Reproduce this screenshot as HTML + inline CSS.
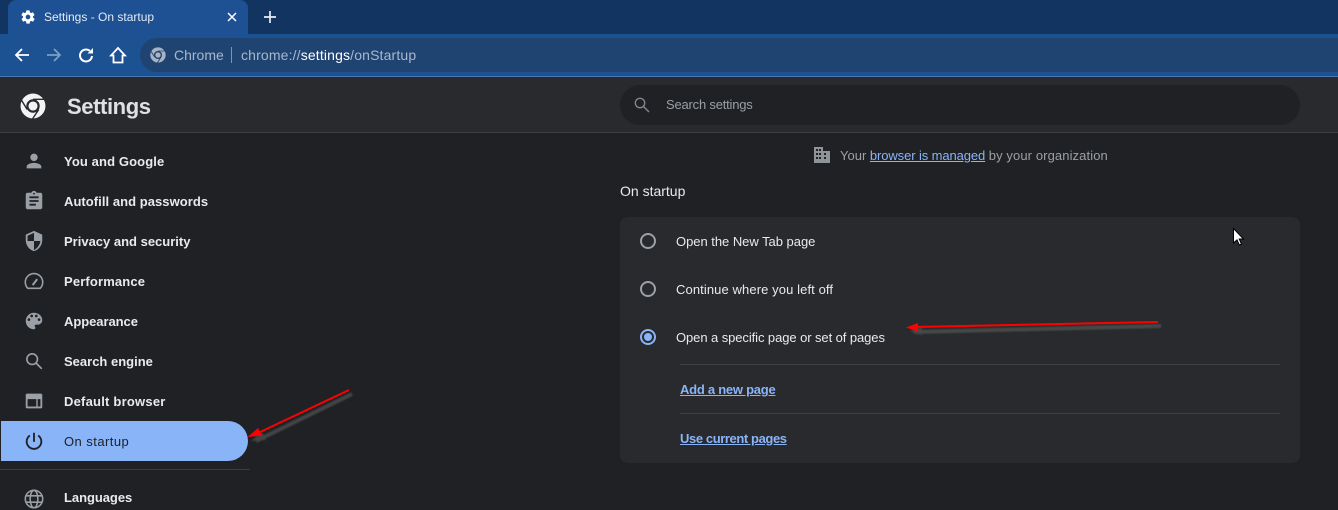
<!DOCTYPE html>
<html>
<head>
<meta charset="utf-8">
<style>
html,body{margin:0;padding:0;width:1338px;height:504px;overflow:hidden;background:#202124;font-family:"Liberation Sans",sans-serif;}
.a{position:absolute;white-space:nowrap;}
.nav{position:absolute;left:64px;font-size:13px;font-weight:700;color:#e8eaed;line-height:16px;white-space:nowrap;letter-spacing:0}
.ic{position:absolute;left:23px;width:22px;height:22px}
.f{fill:#9aa0a6}
.opt{position:absolute;left:676px;font-size:13px;color:#e8eaed;line-height:16px;white-space:nowrap;letter-spacing:-.08px}
.radio{position:absolute;left:640px;width:12px;height:12px;border:2px solid #9aa0a6;border-radius:50%}
.lnk{position:absolute;left:680px;font-size:13px;font-weight:700;color:#8ab4f8;text-decoration:underline;line-height:16px;white-space:nowrap;letter-spacing:-.25px}
</style>
</head>
<body>
<!-- top chrome -->
<div class="a" style="left:0;top:0;width:1338px;height:34px;background:#123460"></div>
<div class="a" style="left:0;top:34px;width:1338px;height:42px;background:#1c5192"></div>
<div class="a" style="left:0;top:76px;width:1338px;height:1px;background:#4a78b0"></div>
<div class="a" style="left:8px;top:0;width:240px;height:36px;background:#1d5193;border-radius:8px 8px 0 0"></div>
<svg class="a" style="left:20px;top:9px" width="16" height="16" viewBox="0 0 24 24" fill="#fff"><path d="M19.400 13c.1-.3.1-.6.1-1s0-.7-.1-1l2.100-1.600c.2-.2.2-.4.1-.6l-2-3.500c-.1-.2-.4-.3-.6-.2l-2.500 1c-.5-.4-1.100-.7-1.700-1l-.4-2.600c0-.3-.2-.4-.5-.4h-4c-.3 0-.5.1-.5.4l-.4 2.600c-.6.300-1.200.6-1.700 1l-2.500-1c-.2-.1-.5 0-.6.2l-2 3.500c-.1.200-.1.400.1.600L4.600 11c0 .3-.1.600-.1 1s0 .7.1 1l-2.100 1.600c-.2.200-.2.400-.1.600l2 3.500c.1.200.4.300.6.200l2.500-1c.5.400 1.100.7 1.700 1l.4 2.600c0 .3.200.4.500.4h4c.3 0 .5-.1.500-.4l.4-2.600c.6-.3 1.200-.6 1.700-1l2.500 1c.2.100.5 0 .6-.2l2-3.500c.1-.2.1-.4-.1-.6zM12 15.500a3.500 3.500 0 1 1 0-7 3.500 3.500 0 0 1 0 7z"/></svg>
<div class="a" style="left:44px;top:9px;font-size:12px;line-height:16px;color:#e4ebf5">Settings - On startup</div>
<svg class="a" style="left:226px;top:11px" width="12" height="12" viewBox="0 0 12 12" stroke="#fff" stroke-width="1.500" fill="none"><path d="M2 2l8 8M10 2l-8 8"/></svg>
<svg class="a" style="left:263px;top:10px" width="14" height="14" viewBox="0 0 14 14" stroke="#e8eef7" stroke-width="1.700" fill="none"><path d="M7 1v12M1 7h12"/></svg>
<!-- toolbar icons -->
<svg class="a" style="left:14px;top:47px" width="16" height="16" viewBox="0 0 16 16" stroke="#fff" stroke-width="1.800" fill="none"><path d="M15 8H2M8 2L2 8l6 6"/></svg>
<svg class="a" style="left:46px;top:47px" width="16" height="16" viewBox="0 0 16 16" stroke="#7f9ec6" stroke-width="1.800" fill="none"><path d="M1 8h13M8 2l6 6-6 6"/></svg>
<svg class="a" style="left:78px;top:47px" width="16" height="16" viewBox="0 0 16 16" stroke="#fff" stroke-width="2" fill="none"><path d="M14 9a6 6 0 1 1-2.200-5.200"/><path d="M15 1v5.500H9.500z" fill="#fff" stroke="none"/></svg>
<svg class="a" style="left:109px;top:46px" width="18" height="18" viewBox="0 0 18 18" stroke="#fff" stroke-width="1.800" fill="none"><path d="M9 2L2 9.500h2.500V16.500h9V9.500H16z" stroke-linejoin="miter"/></svg>
<!-- omnibox -->
<div class="a" style="left:140px;top:38px;width:1198px;height:34px;background:#1f4472;border-radius:17px 0 0 17px"></div>
<svg class="a" style="left:150px;top:47px" width="16" height="16" viewBox="0 0 24 24"><circle cx="12" cy="12" r="11.500" fill="#a9b4c2"/><circle cx="12" cy="12" r="6" fill="#1f4472"/><circle cx="12" cy="12" r="4" fill="#a9b4c2"/><path d="M12 6h11M7 15L1.500 6.500M16.500 15L11 24" stroke="#1f4472" stroke-width="1.300" fill="none"/></svg>
<div class="a" style="left:174px;top:47px;font-size:14px;line-height:16px;color:#a8b8cc">Chrome</div>
<div class="a" style="left:231px;top:47px;width:1px;height:16px;background:#7f95b2"></div>
<div class="a" style="left:241px;top:47px;font-size:14px;line-height:16px;color:#a8b8cc;letter-spacing:.15px">chrome://<span style="color:#fff">settings</span>/onStartup</div>
<!-- settings header -->
<div class="a" style="left:0;top:77px;width:1338px;height:55px;background:#292a2d"></div>
<div class="a" style="left:0;top:132px;width:1338px;height:1px;background:#3f4043"></div>
<svg class="a" style="left:20px;top:93px" width="26" height="26" viewBox="0 0 24 24"><circle cx="12" cy="12" r="11.500" fill="#f1f3f4"/><circle cx="12" cy="12" r="6.200" fill="#292a2d"/><circle cx="12" cy="12" r="4.200" fill="#f1f3f4"/><path d="M12 5.800h11M6.600 15.200L1 6M17.300 15.200L11.500 24" stroke="#292a2d" stroke-width="1.300" fill="none"/></svg>
<div class="a" style="left:67px;top:94px;font-size:22px;line-height:26px;font-weight:700;color:#dfe1e5;letter-spacing:-.4px">Settings</div>
<div class="a" style="left:620px;top:85px;width:680px;height:40px;background:#202124;border-radius:20px"></div>
<svg class="a" style="left:634px;top:97px" width="16" height="16" viewBox="0 0 16 16" stroke="#80868b" stroke-width="1.400" fill="none"><circle cx="6" cy="6" r="4.700"/><path d="M9.500 9.500l5.500 5.500"/></svg>
<div class="a" style="left:666px;top:97px;font-size:13px;line-height:16px;color:#9aa0a6;letter-spacing:-.2px">Search settings</div>
<!-- sidebar icons -->
<svg class="ic" style="top:150px" viewBox="0 0 24 24"><path class="f" d="M12 12c2.210 0 4-1.790 4-4s-1.790-4-4-4-4 1.790-4 4 1.790 4 4 4zm0 2c-2.670 0-8 1.340-8 4v2h16v-2c0-2.660-5.330-4-8-4z"/></svg>
<svg class="ic" style="top:190px" viewBox="0 0 24 24"><path class="f" d="M19 3h-4.180C14.400 1.840 13.300 1 12 1c-1.300 0-2.400.84-2.820 2H5c-1.100 0-2 .9-2 2v14c0 1.100.9 2 2 2h14c1.100 0 2-.9 2-2V5c0-1.100-.9-2-2-2zm-7 0c.55 0 1 .45 1 1s-.45 1-1 1-1-.45-1-1 .45-1 1-1zm2 14H7v-2h7v2zm3-4H7v-2h10v2zm0-4H7V7h10v2z"/></svg>
<svg class="ic" style="top:230px" viewBox="0 0 24 24"><path class="f" d="M12 1L3 5v6c0 5.550 3.840 10.740 9 12 5.160-1.260 9-6.450 9-12V5l-9-4zm0 10.990h7c-.53 4.120-3.280 7.790-7 9.940V12H5V6.300l7-3.110v8.800z"/></svg>
<svg class="ic" style="top:270px" viewBox="0 0 24 24" stroke="#9aa0a6" stroke-width="1.700" fill="none"><path d="M5.200 20a9.500 9.500 0 1 1 13.600 0z"/><path d="M10.500 16.500l5-6.500" stroke-width="2.200"/></svg>
<svg class="ic" style="top:310px" viewBox="0 0 24 24"><path class="f" d="M12 3c-4.970 0-9 4.030-9 9s4.030 9 9 9c.83 0 1.500-.67 1.500-1.500 0-.39-.15-.74-.39-1.010-.23-.26-.38-.61-.38-.99 0-.83.67-1.500 1.500-1.500H16c2.760 0 5-2.240 5-5 0-4.420-4.030-8-9-8zm-5.500 9c-.83 0-1.500-.67-1.500-1.500S5.670 9 6.500 9 8 9.670 8 10.500 7.330 12 6.500 12zm3-4C8.670 8 8 7.330 8 6.500S8.670 5 9.500 5s1.500.67 1.500 1.500S10.330 8 9.500 8zm5 0c-.83 0-1.500-.67-1.500-1.500S13.670 5 14.500 5s1.500.67 1.500 1.500S15.330 8 14.500 8zm3 4c-.83 0-1.500-.67-1.500-1.500S16.670 9 17.500 9s1.500.67 1.500 1.500-.67 1.500-1.500 1.500z"/></svg>
<svg class="ic" style="top:350px" viewBox="0 0 24 24" stroke="#9aa0a6" stroke-width="1.800" fill="none"><circle cx="10" cy="10" r="5.800"/><path d="M14.300 14.300L20.500 20.500"/></svg>
<svg class="ic" style="top:390px" viewBox="0 0 24 24"><path class="f" fill-rule="evenodd" d="M4.500 4h15A1.500 1.500 0 0 1 21 5.500v13a1.500 1.500 0 0 1-1.500 1.500h-15A1.500 1.500 0 0 1 3 18.500v-13A1.500 1.500 0 0 1 4.500 4zM5 10v8h9.500v-8zm11 0v8h3v-8z"/></svg>
<div class="a" style="left:1px;top:421px;width:247px;height:40px;background:#8ab4f8;border-radius:0 20px 20px 0"></div>
<svg class="ic" style="top:430px" viewBox="0 0 24 24" stroke="#202124" stroke-width="2" fill="none"><path d="M12 3v10M7.500 6a8 8 0 1 0 9 0"/></svg>
<div class="a" style="left:0;top:469px;width:250px;height:1px;background:#3c3d40"></div>
<svg class="ic" style="top:488px" viewBox="0 0 24 24" stroke="#9aa0a6" stroke-width="1.700" fill="none"><circle cx="12" cy="12" r="9.500"/><ellipse cx="12" cy="12" rx="4.200" ry="9.500"/><path d="M3 8.500h18M3 15.500h18"/></svg>
<!-- sidebar labels -->
<div class="nav" style="top:154px;letter-spacing:.12px">You and Google</div>
<div class="nav" style="top:194px;letter-spacing:.05px">Autofill and passwords</div>
<div class="nav" style="top:234px;letter-spacing:0">Privacy and security</div>
<div class="nav" style="top:274px;letter-spacing:.15px">Performance</div>
<div class="nav" style="top:314px;letter-spacing:-.05px">Appearance</div>
<div class="nav" style="top:354px;letter-spacing:0">Search engine</div>
<div class="nav" style="top:394px;letter-spacing:.22px">Default browser</div>
<div class="nav" style="top:434px;color:#202124;font-weight:400;letter-spacing:.45px">On startup</div>
<div class="nav" style="top:490px;letter-spacing:-.05px">Languages</div>
<!-- managed -->
<svg class="a" style="left:813px;top:147px" width="18" height="16" viewBox="0 0 18 16"><path fill="#8f9499" fill-rule="evenodd" d="M1 0h9v4h7v12H1zM3 2v2h2V2zm3 0v2h2V2zM3 6v2h2V6zm3 0v2h2V6zM3 10v2h2v-2zm3 0v2h2v-2zM11 6v2h2V6zm0 4v2h2v-2z"/></svg>
<div class="a" style="left:840px;top:148px;font-size:13px;line-height:16px;color:#9aa0a6">Your <span style="color:#8ab4f8;text-decoration:underline;letter-spacing:-.1px">browser is managed</span> <span style="letter-spacing:.1px">by your organization</span></div>
<div class="a" style="left:620px;top:183px;font-size:14px;line-height:16px;color:#e8eaed">On startup</div>
<!-- card -->
<div class="a" style="left:620px;top:217px;width:680px;height:246px;background:#292a2d;border-radius:8px"></div>
<div class="radio" style="top:233px"></div>
<div class="opt" style="top:234px;letter-spacing:-.03px">Open the New Tab page</div>
<div class="radio" style="top:281px"></div>
<div class="opt" style="top:282px;letter-spacing:.1px">Continue where you left off</div>
<div class="radio" style="top:329px;border-color:#8ab4f8"></div>
<div class="a" style="left:644px;top:333px;width:8px;height:8px;border-radius:50%;background:#8ab4f8"></div>
<div class="opt" style="top:330px">Open a specific page or set of pages</div>
<div class="a" style="left:680px;top:364px;width:600px;height:1px;background:#3f4043"></div>
<div class="lnk" style="top:382px;letter-spacing:-.25px">Add a new page</div>
<div class="a" style="left:680px;top:413px;width:600px;height:1px;background:#3f4043"></div>
<div class="lnk" style="top:431px;letter-spacing:-.4px">Use current pages</div>
<!-- red arrows -->
<svg class="a" style="left:0;top:0" width="1338" height="504" viewBox="0 0 1338 504" fill="none">
<defs><filter id="b" x="-5%" y="-50%" width="110%" height="200%"><feGaussianBlur stdDeviation=".9"/></filter></defs>
<g filter="url(#b)" opacity=".6">
<path d="M352 394L256 441M1161 326L914 332" stroke="#5c5c5c" stroke-width="4"/>
<path d="M251 441l11-9 4 8zM910 331l12-4v8z" fill="#5c5c5c"/>
</g>
<path d="M349 390L256 434M1158 322L914 327" stroke="#f00" stroke-width="2"/>
<path d="M247.500 437L258 428 262 435.500zM906 327.500L918 323V331.500z" fill="#f00"/>
</svg>
<!-- cursor -->
<svg class="a" style="left:1232px;top:227px" width="13" height="20" viewBox="0 0 13 20"><path d="M1.500 1.500V16L5 12.800 7.300 18l2.200-1-2.300-5h4.300z" fill="#fff" stroke="#000" stroke-width="1"/></svg>
</body>
</html>
